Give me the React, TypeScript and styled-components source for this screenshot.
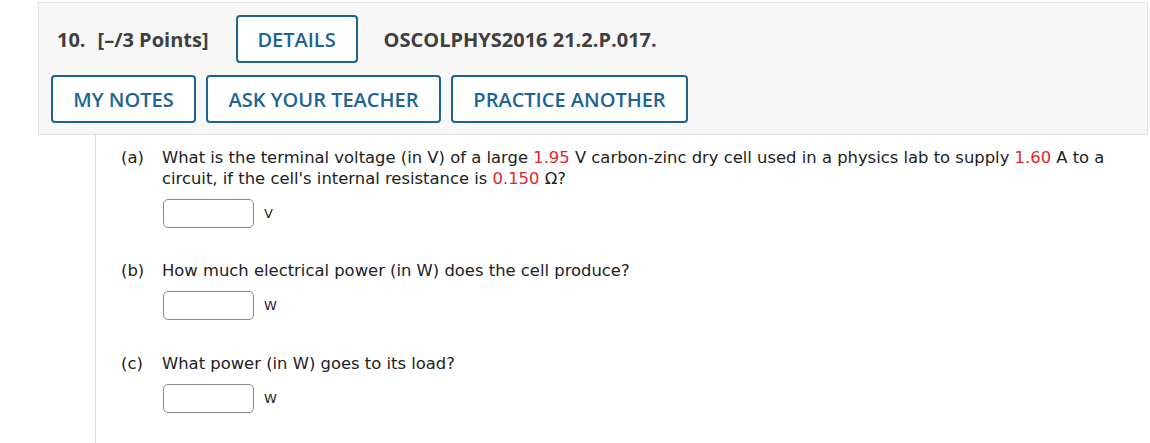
import React from "react";
import styled, { createGlobalStyle } from "styled-components";

const GlobalStyle = createGlobalStyle`
  body {
    margin: 0;
    background: #ffffff;
  }
`;

const Page = styled.div`
  padding: 2px 2px 0 38px;
  width: 1150px;
  height: 443px;
  box-sizing: border-box;
  overflow: hidden;
`;

const Header = styled.div`
  background: #f7f7f7;
  border: 1px solid #e4e4e4;
  padding: 12px 0 11px 12px;
  display: flex;
  flex-direction: column;
  gap: 12px;
`;

const HeaderRow = styled.div<{ indent?: number }>`
  display: flex;
  align-items: center;
  padding-left: ${(p) => p.indent || 0}px;
`;

const Title = styled.span<{ gapLeft?: number }>`
  font-family: "Open Sans", sans-serif;
  font-weight: 700;
  font-size: 20px;
  color: #3f3f3f;
  white-space: pre;
  margin-left: ${(p) => p.gapLeft || 0}px;
`;

const Button = styled.button<{ w: number; gapLeft?: number }>`
  width: ${(p) => p.w}px;
  height: 48px;
  margin-left: ${(p) => p.gapLeft || 0}px;
  border: 2px solid #1d6492;
  border-radius: 4px;
  background: #ffffff;
  color: #1d6492;
  font-family: "Open Sans", sans-serif;
  font-size: 20px;
  font-weight: 600;
  padding: 0;
  box-sizing: border-box;
`;

const Body = styled.div`
  margin-left: 57px;
  border-left: 1px solid #dcdcdc;
  height: 310px;
  padding: 12px 20px 0 25px;
  font-family: "DejaVu Sans", Verdana, sans-serif;
  font-size: 16.4px;
  line-height: 21px;
  color: #222222;
`;

const Part = styled.div<{ gap: number }>`
  display: grid;
  grid-template-columns: 41px 1fr;
  margin-bottom: ${(p) => p.gap}px;
`;

const Label = styled.span``;

const Text = styled.div``;

const Red = styled.span`
  color: #e3262c;
`;

const AnswerRow = styled.div`
  display: flex;
  align-items: center;
  gap: 10px;
  margin-top: 10px;
  height: 29px;
  font-size: 13px;
  line-height: 29px;
`;

const Input = styled.input`
  width: 91px;
  height: 29px;
  box-sizing: border-box;
  border: 1px solid #8a8a8a;
  border-radius: 5px;
  margin: 0 0 0 1px;
  padding: 0;
  background: #fff;
`;

export default function App() {
  return (
    <Page>
      <GlobalStyle />
      <Header>
        <HeaderRow indent={6}>
          <Title>10.</Title>
          <Title gapLeft={12}>[–/3 Points]</Title>
          <Button w={122} gapLeft={27}>DETAILS</Button>
          <Title gapLeft={26}>OSCOLPHYS2016 21.2.P.017.</Title>
        </HeaderRow>
        <HeaderRow>
          <Button w={145}>MY NOTES</Button>
          <Button w={235} gapLeft={10}>ASK YOUR TEACHER</Button>
          <Button w={237} gapLeft={10}>PRACTICE ANOTHER</Button>
        </HeaderRow>
      </Header>
      <Body>
        <Part gap={32}>
          <Label>(a)</Label>
          <Text>
            What is the terminal voltage (in V) of a large <Red>1.95</Red> V carbon-zinc dry cell used in a physics lab to supply <Red>1.60</Red> A to a circuit, if the cell's internal resistance is <Red>0.150</Red> Ω?
            <AnswerRow>
              <Input />
              V
            </AnswerRow>
          </Text>
        </Part>
        <Part gap={33}>
          <Label>(b)</Label>
          <Text>
            How much electrical power (in W) does the cell produce?
            <AnswerRow>
              <Input />
              W
            </AnswerRow>
          </Text>
        </Part>
        <Part gap={0}>
          <Label>(c)</Label>
          <Text>
            What power (in W) goes to its load?
            <AnswerRow>
              <Input />
              W
            </AnswerRow>
          </Text>
        </Part>
      </Body>
    </Page>
  );
}
